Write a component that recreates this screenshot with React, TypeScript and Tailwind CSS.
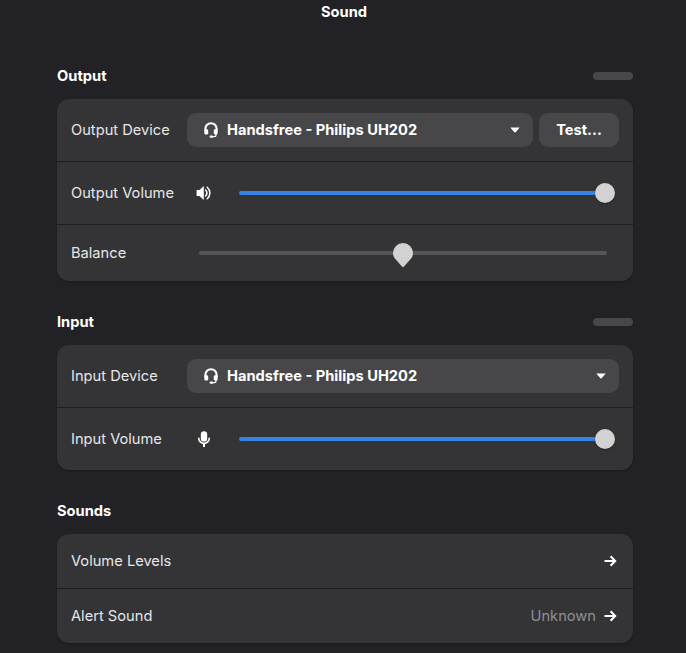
import React from "react";

const Headset = () => (
  <svg width="16" height="16" viewBox="0 0 16 16" className="shrink-0" fill="none">
    <path d="M2.4 9.5V6.8a5.6 5.6 0 0 1 11.2 0v2.7" stroke="#fff" strokeWidth="2.1" />
    <rect x="1.4" y="7.2" width="3.8" height="5.4" rx="1.3" fill="#fff" />
    <rect x="10.8" y="7.2" width="3.8" height="5.4" rx="1.3" fill="#fff" />
    <path d="M13 12v1a1.6 1.6 0 0 1-1.6 1.6H8.4" stroke="#fff" strokeWidth="1.3" />
    <rect x="6.6" y="13.6" width="3.6" height="2.1" rx="1" fill="#fff" />
  </svg>
);

const Speaker = () => (
  <svg width="16" height="16" viewBox="0 0 16 16" className="shrink-0" fill="none">
    <path d="M0.6 5H3.4L7.8 1V15L3.4 11H0.6Z" fill="#fff" />
    <path d="M9.6 5a4.2 4.2 0 0 1 0 6" stroke="#fff" strokeWidth="1.6" strokeLinecap="round" />
    <path d="M11.2 2.2a7.6 7.6 0 0 1 0 11.6" stroke="#fff" strokeWidth="1.5" strokeLinecap="round" />
  </svg>
);

const Mic = () => (
  <svg width="16" height="16" viewBox="0 0 16 16" className="shrink-0" fill="none">
    <rect x="4.8" y="0.2" width="6.4" height="10.4" rx="3.2" fill="#fff" />
    <path d="M2.8 7.2a5.2 5.2 0 0 0 10.4 0" stroke="#fff" strokeWidth="1.6" strokeLinecap="round" />
    <rect x="7" y="12" width="2" height="4" fill="#fff" />
  </svg>
);

const Arrow = () => (
  <svg width="14" height="14" viewBox="0 0 14 14" className="shrink-0" fill="none">
    <path d="M1.5 7H12M7.6 2.2 12.2 7 7.6 11.8" stroke="#fff" strokeWidth="2" />
  </svg>
);

const Caret = () => (
  <svg width="10" height="6" viewBox="0 0 10 6" className="shrink-0">
    <path d="M0.3 0.5H9.7L5.6 5.2a.8.8 0 0 1-1.2 0Z" fill="#fff" />
  </svg>
);

function Combo() {
  return (
    <button className="flex-1 h-[34px] rounded-[9px] bg-[#47474a] flex items-center pl-[16px] pr-[13px] text-white font-bold text-[14.67px]">
      <Headset />
      <span className="ml-[8px] flex-1 text-left">Handsfree - Philips UH202</span>
      <Caret />
    </button>
  );
}

function Slider({ icon }: { icon: React.ReactNode }) {
  return (
    <div className="flex-1 flex items-center pl-[9px] pr-[14px]">
      {icon}
      <div className="relative ml-[27px] flex-1 h-[4px] rounded-full bg-[#3584e4]">
        <div className="absolute right-[-9.5px] top-[-8px] w-[20px] h-[20px] rounded-full bg-[#d2d2d2] shadow-[0_1px_2px_rgba(0,0,0,0.35)]" />
      </div>
    </div>
  );
}

function Heading({ label, toggle }: { label: string; toggle?: boolean }) {
  return (
    <div className="h-[24px] mb-[11px] flex items-center justify-between">
      <h2 className="font-bold text-[14.67px] text-white">{label}</h2>
      {toggle && <div className="w-[40px] h-[8px] rounded-full bg-[#47474a]" />}
    </div>
  );
}

const rowLabel = "w-[116px] shrink-0 text-[14.67px] text-[#e6e6e7]";

export default function App() {
  return (
    <div
      className="h-[653px] w-[686px] overflow-hidden bg-[#222226] text-white"
      style={{ fontFamily: "Inter, 'Noto Sans', sans-serif" }}
    >
      <div className="h-[24px] pl-[2px] flex items-center justify-center font-bold text-[14.67px]">Sound</div>

      <div className="pl-[57px] pr-[53px] pt-[40px]">
        <Heading label="Output" toggle />
        <div className="rounded-[12px] bg-[#343437] shadow-[0_1px_2px_rgba(0,0,0,0.25)] divide-y divide-[#1f1f22] mb-[29px]">
          <div className="h-[62px] box-content flex items-center px-[14px]">
            <span className={rowLabel}>Output Device</span>
            <div className="flex-1 flex gap-[6px]">
              <Combo />
              <button className="w-[80px] h-[34px] rounded-[9px] bg-[#47474a] font-bold text-[14.67px] text-white">Test...</button>
            </div>
          </div>
          <div className="h-[62px] box-content flex items-center px-[14px]">
            <span className={rowLabel}>Output Volume</span>
            <Slider icon={<Speaker />} />
          </div>
          <div className="h-[56px] box-content flex items-center px-[14px]">
            <span className="w-[128px] shrink-0 text-[14.67px] text-[#e6e6e7]">Balance</span>
            <div className="relative flex-1 mr-[12px] h-[4px] rounded-full bg-[#555558]">
              <svg width="20" height="25" viewBox="0 0 20 25" className="absolute left-[194px] top-[-8px] overflow-visible">
                <path d="M10 0a10 10 0 0 1 10 10c0 3-1.3 5-3 6.8L11 23.4a1.4 1.4 0 0 1-2 0L3 16.8C1.3 15 0 13 0 10A10 10 0 0 1 10 0Z" fill="#d2d2d2" />
              </svg>
            </div>
          </div>
        </div>

        <Heading label="Input" toggle />
        <div className="rounded-[12px] bg-[#343437] shadow-[0_1px_2px_rgba(0,0,0,0.25)] divide-y divide-[#1f1f22] mb-[29px]">
          <div className="h-[62px] box-content flex items-center px-[14px]">
            <span className={rowLabel}>Input Device</span>
            <Combo />
          </div>
          <div className="h-[62px] box-content flex items-center px-[14px]">
            <span className={rowLabel}>Input Volume</span>
            <Slider icon={<Mic />} />
          </div>
        </div>

        <Heading label="Sounds" />
        <div className="rounded-[12px] bg-[#343437] shadow-[0_1px_2px_rgba(0,0,0,0.25)] divide-y divide-[#1f1f22]">
          <div className="h-[54px] box-content flex items-center justify-between pl-[14px] pr-[16px]">
            <span className="text-[14.67px] text-[#e6e6e7]">Volume Levels</span>
            <Arrow />
          </div>
          <div className="h-[54px] box-content flex items-center pl-[14px] pr-[16px]">
            <span className="flex-1 text-[14.67px] text-[#e6e6e7]">Alert Sound</span>
            <span className="text-[14.67px] text-[#8f8f91] mr-[7px]">Unknown</span>
            <Arrow />
          </div>
        </div>
      </div>
    </div>
  );
}
